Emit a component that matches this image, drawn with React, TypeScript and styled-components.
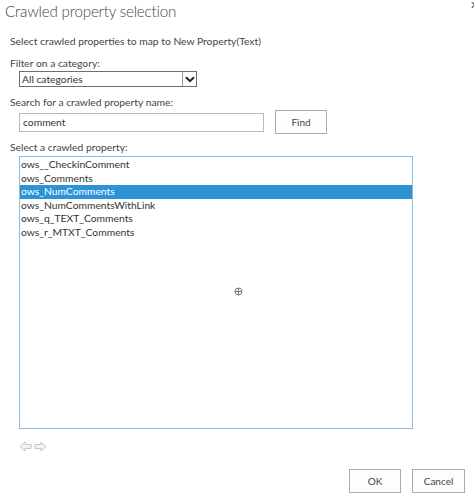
import React from 'react';
import styled, { createGlobalStyle } from 'styled-components';

const GlobalStyle = createGlobalStyle`
  html, body {
    margin: 0;
    padding: 0;
    background: #fff;
  }
  body {
    font-family: Lato, "Open Sans", "Liberation Sans", sans-serif;
    color: #444;
    overflow: hidden;
  }
`;

const properties = [
  'ows__CheckinComment',
  'ows_Comments',
  'ows_NumComments',
  'ows_NumCommentsWithLink',
  'ows_q_TEXT_Comments',
  'ows_r_MTXT_Comments',
];

function PropertyDialog({ ...props }) {
  const selected = 2;
  return (
    <Dialog {...props}>
      <Header>
        <Title>Crawled property selection</Title>
        <Close>✕</Close>
      </Header>
      <Intro>Select crawled properties to map to New Property(Text)</Intro>
      <Label>Filter on a category:</Label>
      <Indent>
        <Select>
          <span>All categories</span>
          <Arrow>
            <svg width="10" height="7" viewBox="0 0 10 7">
              <path d="M1 1.2 L5 5.2 L9 1.2" stroke="#222" strokeWidth="2" fill="none" />
            </svg>
          </Arrow>
        </Select>
      </Indent>
      <Label $top={8}>Search for a crawled property name:</Label>
      <SearchRow>
        <Input>comment</Input>
        <Button $width={52}>Find</Button>
      </SearchRow>
      <Label $top={6}>Select a crawled property:</Label>
      <Indent>
        <ListBox>
          {properties.map((p, i) => (
            <Item key={p} $selected={i === selected}>{p}</Item>
          ))}
          <Cursor>
            <svg width="9" height="9" viewBox="0 0 9 9">
              <circle cx="4.5" cy="4.5" r="3.5" stroke="#777" strokeWidth="1" fill="none" />
              <path d="M4.5 1 V8 M1 4.5 H8" stroke="#777" strokeWidth="1" />
            </svg>
          </Cursor>
        </ListBox>
      </Indent>
      <Nav>
        <svg width="28" height="11" viewBox="0 0 28 11">
          <path d="M1 5.5 L6 1 V3.5 H12 V7.5 H6 V10 Z" stroke="#c4c4c4" strokeWidth="1" fill="#f4f4f4" strokeLinejoin="round" />
          <path d="M27 5.5 L22 1 V3.5 H16 V7.5 H22 V10 Z" stroke="#c4c4c4" strokeWidth="1" fill="#f4f4f4" strokeLinejoin="round" />
        </svg>
      </Nav>
      <Footer>
        <Button $width={52}>OK</Button>
        <Button $width={53}>Cancel</Button>
      </Footer>
    </Dialog>
  );
}

const Dialog = styled.div`
  width: 474px;
  height: 501px;
  box-sizing: border-box;
  display: flex;
  flex-direction: column;
  font-size: 10.3px;
  overflow: hidden;
`;

const Header = styled.div`
  display: flex;
  justify-content: space-between;
  align-items: flex-start;
  padding-left: 5px;
  height: 26px;
`;

const Title = styled.div`
  font-size: 15.2px;
  font-weight: 300;
  color: #444;
  line-height: 22px;
  letter-spacing: -0.2px;
`;

const Close = styled.div`
  font-size: 11px;
  color: #555;
  line-height: 10px;
  margin-right: -5px;
`;

const Intro = styled.div`
  padding-left: 10px;
  margin-top: 8px;
  line-height: 14px;
`;

const Label = styled.div<{ $top?: number }>`
  padding-left: 10px;
  margin-top: ${(p) => p.$top ?? 8}px;
  line-height: 14px;
`;

const Indent = styled.div`
  padding-left: 19px;
`;

const Select = styled.div`
  margin-top: 1px;
  width: 178px;
  height: 16px;
  box-sizing: border-box;
  border: 1px solid #6e6e6e;
  display: flex;
  align-items: center;
  justify-content: space-between;
  padding-left: 2px;
  color: #333;
  line-height: 14px;
`;

const Arrow = styled.div`
  width: 14px;
  height: 14px;
  box-sizing: border-box;
  border-left: 1px solid #9a9a9a;
  display: flex;
  align-items: center;
  justify-content: center;
`;

const SearchRow = styled.div`
  display: flex;
  align-items: center;
  gap: 11px;
  padding-left: 19px;
  margin-top: 1px;
`;

const Input = styled.div`
  width: 245px;
  height: 19px;
  box-sizing: border-box;
  border: 1px solid #b9b9b9;
  padding-left: 3px;
  line-height: 17px;
  color: #333;
`;

const Button = styled.div<{ $width: number }>`
  width: ${(p) => p.$width}px;
  height: 24px;
  box-sizing: border-box;
  border: 1px solid #ababab;
  background: #fdfdfd;
  display: flex;
  align-items: center;
  justify-content: center;
  font-size: 10px;
  color: #444;
`;

const ListBox = styled.div`
  position: relative;
  margin-top: 2px;
  width: 394px;
  height: 273px;
  box-sizing: border-box;
  border: 1px solid #8cbce4;
  padding-top: 1px;
`;

const Item = styled.div<{ $selected?: boolean }>`
  height: 13.6px;
  line-height: 13.6px;
  padding-left: 1px;
  color: ${(p) => (p.$selected ? '#fff' : '#333')};
  background: ${(p) => (p.$selected ? '#2b93d6' : 'transparent')};
`;

const Cursor = styled.div`
  position: absolute;
  left: 214px;
  top: 130px;
  line-height: 0;
`;

const Nav = styled.div`
  padding-left: 19px;
  margin-top: 12px;
  line-height: 0;
`;

const Footer = styled.div`
  display: flex;
  justify-content: flex-end;
  gap: 11px;
  padding-right: 9px;
  margin-top: 17px;
`;

export default function App() {
  return (
    <>
      <GlobalStyle />
      <PropertyDialog />
    </>
  );
}
